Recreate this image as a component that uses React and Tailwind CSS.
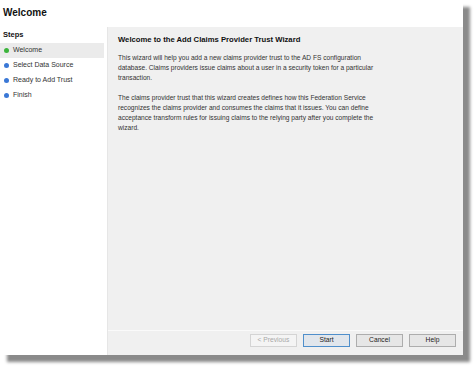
import React from "react";

const steps = [
  { label: "Welcome", active: true },
  { label: "Select Data Source" },
  { label: "Ready to Add Trust" },
  { label: "Finish" },
];

const Bullet = ({ active }) => (
  <span
    className={
      "inline-block w-[5px] h-[5px] rounded-full " +
      (active ? "bg-[#3cb43c]" : "bg-[#3a78d6]")
    }
  />
);

const WizButton = ({ children, disabled, primary }) => (
  <button
    className={
      "w-[47px] h-[13px] text-[6.7px] leading-none border " +
      (disabled
        ? "border-[#d4d4d4] bg-[#f4f4f4] text-[#a8a8a8]"
        : primary
        ? "border-[#4f8fcb] bg-[#e1e6ec] text-[#222]"
        : "border-[#adadad] bg-[#e6e6e6] text-[#222]")
    }
  >
    {children}
  </button>
);

export default function App() {
  return (
    <div
      className="w-[474px] h-[366px] bg-white"
      style={{ fontFamily: '"Liberation Sans", Arial, sans-serif' }}
    >
      <div className="w-[463px] h-[355px] bg-white flex flex-col shadow-[7px_7px_3px_#8a8a8a]">
        <div className="h-[27px] px-[3px] pt-[7px] text-[10px] font-bold text-[#111] leading-[12px]">
          Welcome
        </div>
        <div className="flex-1 flex">
          <div className="w-[108px] border-r border-[#e6e6e6] bg-white">
            <div className="h-[16px] px-[3px] pt-[3px] text-[7.5px] font-bold text-[#111] leading-[9px]">
              Steps
            </div>
            <div className="flex flex-col">
              {steps.map((s) => (
                <div
                  key={s.label}
                  className={
                    "h-[15px] flex items-center gap-[4px] pl-[4px] text-[7px] text-[#333] mr-[3px] " +
                    (s.active ? "bg-[#ebebeb]" : "")
                  }
                >
                  <Bullet active={s.active} />
                  <span>{s.label}</span>
                </div>
              ))}
            </div>
          </div>
          <div className="flex-1 flex flex-col bg-[#f0f0f0]">
            <div className="flex-1 px-[10px] pt-[8px] text-[#333]">
              <div className="text-[7.7px] font-bold leading-[10px] text-[#111]">
                Welcome to the Add Claims Provider Trust Wizard
              </div>
              <p className="mt-[8px] text-[6.6px] leading-[10px]">
                This wizard will help you add a new claims provider trust to the AD FS configuration
                <br />
                database. Claims providers issue claims about a user in a security token for a particular
                <br />
                transaction.
              </p>
              <p className="mt-[10px] text-[6.6px] leading-[10px]">
                The claims provider trust that this wizard creates defines how this Federation Service
                <br />
                recognizes the claims provider and consumes the claims that it issues. You can define
                <br />
                acceptance transform rules for issuing claims to the relying party after you complete the
                <br />
                wizard.
              </p>
            </div>
            <div className="h-[25px] border-t border-[#fafafa] flex items-start justify-end gap-[6px] pt-[3px] pr-[7px]">
              <WizButton disabled>&lt; Previous</WizButton>
              <WizButton primary>Start</WizButton>
              <WizButton>Cancel</WizButton>
              <WizButton>Help</WizButton>
            </div>
          </div>
        </div>
      </div>
    </div>
  );
}
